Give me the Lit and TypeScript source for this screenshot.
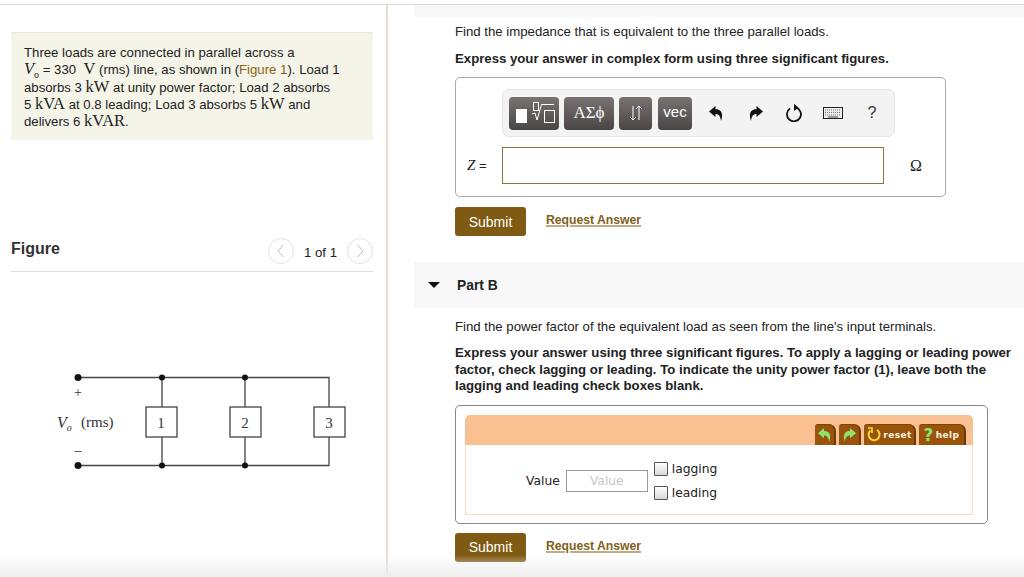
import { LitElement, html, css, svg } from 'lit';
import { customElement } from 'lit/decorators.js';

const undoIcon = svg`<path d="M0 5.5 L6.5 0 L6.5 3.2 C11.5 3.2 15 6.5 12 15 C11.5 10.5 10 8 6.5 8 L6.5 11 Z" fill="currentColor"/>`;
const redoIcon = svg`<path d="M14 5.5 L7.5 0 L7.5 3.2 C2.5 3.2 -1 6.5 2 15 C2.5 10.5 4 8 7.5 8 L7.5 11 Z" fill="currentColor"/>`;

@customElement('app-root')
export class AppRoot extends LitElement {
  static styles = css`
    :host {
      display: block;
      width: 1024px;
      height: 577px;
      overflow: hidden;
      background: #fff;
      font-family: "Liberation Sans", Arial, sans-serif;
      font-size: 13.2px;
      color: #222;
    }
    .page {
      position: relative;
      display: grid;
      grid-template-columns: 386px 2px 1fr;
      height: 572px;
      margin-top: 4px;
      border-top: 1px solid #d8d8d8;
    }
    .divider { background: #e6dcd2; }
    .left { padding: 27px 13px 0 11px; }
    .m { font-family: "Liberation Serif", serif; font-size: 16.5px; line-height: 1; }
    .problem {
      height: 108px;
      box-sizing: border-box;
      background: #f5f4e9;
      border-top: 1px solid #e9e8e0;
      padding: 12px 13px;
      font-size: 13.2px;
      line-height: 16.3px;
      color: #222;
    }
    .problem a { color: #8a6414; }
    .problem sub { font-size: 10px; line-height: 0; font-style: normal; }
    .figure-head {
      display: flex;
      align-items: center;
      margin-top: 96px;
      height: 35px;
      border-bottom: 1px solid #ddd;
    }
    .figure-head h3 { margin: 0 0 10px; font-size: 16px; color: #333; flex: 1; }
    .pager { display: flex; align-items: center; font-size: 13.2px; padding-bottom: 5px; }
    .pager span { margin: 2px 10px 0; }
    .circ {
      width: 26px; height: 26px; border: 1px solid #e3e3e3; border-radius: 50%;
      box-sizing: border-box; display: flex; align-items: center; justify-content: center;
    }
    .circuit { display: block; margin: 98px 0 0 39px; }
    .right { min-width: 0; }
    .bandtop { margin-left: 26px; height: 12px; background: #f8f8f8; }
    .content { padding: 8px 11px 0 67px; }
    .content2 { padding: 12px 11px 0 67px; }
    .line { margin: 0; line-height: 14px; color: #222; }
    .bold { font-weight: bold; margin-top: 12px; line-height: 16.4px; }
    .bold.tight { margin-top: 11px; }
    .answer {
      width: 491px; height: 120px; box-sizing: border-box;
      margin-top: 10px;
      border: 1px solid #aaa; border-radius: 5px; padding: 11px 0 0 46px;
    }
    .toolbar {
      width: 393px; height: 48px; box-sizing: border-box;
      background: #f3f3f3; border: 1px solid #e4e4e4; border-radius: 7px;
      display: flex; align-items: center; padding-left: 6px;
    }
    .tb {
      height: 33px; box-sizing: border-box; border-radius: 4px;
      background: linear-gradient(#7a7272, #4a4646);
      color: #fff; display: flex; align-items: center; justify-content: center;
      margin-right: 5px;
    }
    .tb.greek { width: 50px; font-family: "Liberation Serif", serif; font-size: 17px; }
    .tb.vec { width: 34px; font-size: 15px; margin: 0 0 0 1px; padding-bottom: 3px; }
    .ic { display: flex; align-items: center; justify-content: center; color: #111; }
    .help { width: 14px; margin-left: 22px; font-size: 16px; color: #333; }
    .zrow { display: flex; align-items: center; margin: 10px 0 0 -36px; }
    .zlabel { width: 36px; font-size: 13px; padding-left: 1px; box-sizing: border-box; }
    .zlabel i { font-size: 15px; }
    .zinput { width: 382px; height: 37px; box-sizing: border-box; border: 1px solid #8a7440; background: #fff; }
    .unit { margin-left: 26px; font-family: "Liberation Serif", serif; font-size: 16px; }
    .actions { display: flex; align-items: center; margin-top: 10px; }
    .submit {
      width: 71px; height: 29px; border-radius: 3px; background: #7f5a12; color: #fff;
      display: flex; align-items: center; justify-content: center; font-size: 14px;
    }
    .req {
      margin: -3px 0 0 20px; color: #80601a; font-weight: bold; font-size: 12.2px;
      text-decoration: underline; text-decoration-color: #bfae84; text-decoration-thickness: 2px; text-underline-offset: 1px;
    }
    .partb {
      margin: 26px 0 0 26px; height: 46px; background: #f8f8f8;
      display: flex; align-items: center; font-weight: bold; font-size: 13.8px; padding-left: 14px; gap: 17px;
    }
    .tri { width: 0; height: 0; border-left: 6px solid transparent; border-right: 6px solid transparent; border-top: 6px solid #111; }
    .answer2 {
      width: 533px; height: 119px; box-sizing: border-box; margin-top: 10px;
      border: 1px solid #888; border-radius: 5px; padding: 9px 14px 0 9px;
    }
    .tool {
      height: 100px; box-sizing: border-box; border: 1px solid #fbd9bc; border-top: 0; border-radius: 5px 5px 0 0;
    }
    .toolhead {
      height: 30px; margin: 0 -1px; background: #f9c092; border-radius: 5px 5px 0 0;
      display: flex; justify-content: flex-end; align-items: flex-end; padding-right: 7px; gap: 3px; box-sizing: border-box;
    }
    .tbtn {
      height: 21px; box-sizing: border-box; background: #99530a; border-radius: 3px 7px 0 0;
      border-top: 1px solid #7d4307; border-right: 2px solid #6d3b08;
      display: flex; align-items: center; justify-content: center; gap: 2px;
      color: #fff6e0; font-family: "DejaVu Sans", sans-serif; font-weight: bold; font-size: 9px; letter-spacing: 0.4px;
    }
    .tbtn svg { color: #8fe36a; }
    .qmark { color: #8fe36a; font-size: 17px; }
    .toolbody { display: flex; align-items: center; padding: 17px 0 0 60px; font-family: "DejaVu Sans", sans-serif; font-size: 12.3px; }
    .val { width: 82px; height: 22px; box-sizing: border-box; border: 1px solid #999; margin-left: 6px; color: #c6c6c6; display: flex; align-items: center; justify-content: center; }
    .checks { margin-left: 6px; display: flex; flex-direction: column; gap: 10px; }
    .chk { display: flex; align-items: center; gap: 4px; height: 14px; }
    .box { width: 14px; height: 14px; box-sizing: border-box; border: 1px solid #555; border-radius: 1px; background: linear-gradient(#fff, #d8d8d8); }
    .fade { position: absolute; left: 0; right: 0; bottom: 0; height: 22px; background: linear-gradient(rgba(238, 238, 238, 0), #eee); pointer-events: none; }
  `;

  render() {
    return html`
      <div class="page">
        <div class="left">
          <div class="problem">
            Three loads are connected in parallel across a<br />
            <span class="m"><i>V</i><sub>o</sub></span> = 330 &nbsp;<span class="m">V</span> (rms) line, as shown in (<a>Figure 1</a>). Load 1<br />
            absorbs 3 <span class="m">kW</span> at unity power factor; Load 2 absorbs<br />
            5 <span class="m">kVA</span> at 0.8 leading; Load 3 absorbs 5 <span class="m">kW</span> and<br />
            delivers 6 <span class="m">kVAR</span>.
          </div>
          <div class="figure-head">
            <h3>Figure</h3>
            <div class="pager">
              <div class="circ">
                <svg width="10" height="14" viewBox="0 0 10 14"><path d="M7.5 1 L2 7 L7.5 13" fill="none" stroke="#bbb" /></svg>
              </div>
              <span>1 of 1</span>
              <div class="circ">
                <svg width="10" height="14" viewBox="0 0 10 14"><path d="M2.5 1 L8 7 L2.5 13" fill="none" stroke="#bbb" /></svg>
              </div>
            </div>
          </div>
          ${this.circuit()}
        </div>
        <div class="divider"></div>
        <div class="right">
          <div class="bandtop"></div>
          <div class="content">
            <p class="line">Find the impedance that is equivalent to the three parallel loads.</p>
            <p class="line bold">Express your answer in complex form using three significant figures.</p>
            <div class="answer">
              <div class="toolbar">
                <div class="tb" style="width:50px">
                  <svg width="50" height="33" viewBox="0 0 50 33" fill="none" stroke="#fff">
                    <rect x="7" y="12" width="11" height="14" fill="#fff" stroke="none" />
                    <rect x="24.5" y="5.5" width="5" height="8" />
                    <path d="M23 17 L26 16 L28 23 L32.5 7.5 H45" />
                    <rect x="35.5" y="13.5" width="10" height="12" />
                  </svg>
                </div>
                <div class="tb greek">ΑΣϕ</div>
                <div class="tb" style="width:33px">
                  <svg width="18" height="18" viewBox="0 0 18 18" fill="none" stroke="#fff">
                    <path d="M6 2 V16 M3 13 L6 16 L9 13 M12 16 V2 M9 5 L12 2 L15 5" />
                  </svg>
                </div>
                <div class="tb vec">vec</div>
                <div class="ic" style="width:14px;margin-left:17px">
                  <svg width="14" height="15" viewBox="0 0 14 15">${undoIcon}</svg>
                </div>
                <div class="ic" style="width:14px;margin-left:26px">
                  <svg width="14" height="15" viewBox="0 0 14 15">${redoIcon}</svg>
                </div>
                <div class="ic" style="width:18px;margin-left:22px">
                  <svg width="18" height="18" viewBox="0 0 18 18" fill="none" stroke="#111" stroke-width="1.8">
                    <path d="M5 4.5 A7 7 0 1 0 11 3.6" />
                    <path d="M9 0 L13.5 3.6 L9 7 Z" fill="#111" stroke="none" />
                  </svg>
                </div>
                <div class="ic" style="width:20px;margin-left:20px">
                  <svg width="20" height="12" viewBox="0 0 20 12" fill="none">
                    <rect x="0.5" y="0.5" width="19" height="11" stroke="#222" fill="#eee" />
                    <path d="M2 3 H18 M2 5.5 H18 M2 8 H18" stroke="#777" stroke-dasharray="1 1" />
                    <path d="M5 10 H15" stroke="#444" />
                  </svg>
                </div>
                <div class="ic help">?</div>
              </div>
              <div class="zrow">
                <div class="zlabel"><i class="m">Z</i> =</div>
                <div class="zinput"></div>
                <div class="unit">Ω</div>
              </div>
            </div>
            <div class="actions">
              <div class="submit">Submit</div>
              <div class="req">Request Answer</div>
            </div>
          </div>
          <div class="partb"><div class="tri"></div>Part B</div>
          <div class="content2">
            <p class="line">Find the power factor of the equivalent load as seen from the line's input terminals.</p>
            <p class="line bold tight">Express your answer using three significant figures. To apply a lagging or leading power factor, check lagging or leading. To indicate the unity power factor (1), leave both the lagging and leading check boxes blank.</p>
            <div class="answer2">
              <div class="tool">
                <div class="toolhead">
                  <div class="tbtn" style="width:21px">
                    <svg width="13" height="14" viewBox="0 0 14 15">${undoIcon}</svg>
                  </div>
                  <div class="tbtn" style="width:22px">
                    <svg width="13" height="14" viewBox="0 0 14 15">${redoIcon}</svg>
                  </div>
                  <div class="tbtn" style="width:52px">
                    <svg width="15" height="15" viewBox="0 0 15 15" fill="none" stroke="#fdd835" stroke-width="2">
                      <path d="M4.5 3.5 A5.5 5.5 0 1 0 11 3" />
                      <path d="M2 1 L6 1 L6 6" stroke-width="1.6" />
                    </svg>reset
                  </div>
                  <div class="tbtn" style="width:47px">
                    <span class="qmark">?</span>help
                  </div>
                </div>
                <div class="toolbody">
                  Value
                  <div class="val">Value</div>
                  <div class="checks">
                    <div class="chk"><div class="box"></div>lagging</div>
                    <div class="chk"><div class="box"></div>leading</div>
                  </div>
                </div>
              </div>
            </div>
            <div class="actions" style="margin-top:9px">
              <div class="submit">Submit</div>
              <div class="req">Request Answer</div>
            </div>
          </div>
        </div>
        <div class="fade"></div>
      </div>
    `;
  }

  circuit() {
    return html`
      <svg class="circuit" width="300" height="100" viewBox="50 370 300 100">
        <g fill="none" stroke="#444" stroke-width="1.3">
          <path d="M78 377.500 H329 V407 M329 437 V465.500 H78" />
          <path d="M162 377 V407 M162 437 V465 M245 377 V407 M245 437 V465" />
          <rect x="146" y="407" width="31" height="30" />
          <rect x="230" y="407" width="31" height="30" />
          <rect x="314" y="407" width="31" height="30" />
        </g>
        <g fill="#111">
          <circle cx="78" cy="377.500" r="3.500" />
          <circle cx="162" cy="377.500" r="3" />
          <circle cx="245" cy="377.500" r="3" />
          <circle cx="78" cy="465.500" r="3.500" />
          <circle cx="162" cy="465.500" r="3" />
          <circle cx="245" cy="465.500" r="3" />
        </g>
        <g font-family="Liberation Serif, serif" font-size="15" fill="#333">
          <text x="161" y="428" text-anchor="middle">1</text>
          <text x="245" y="428" text-anchor="middle">2</text>
          <text x="329" y="428" text-anchor="middle">3</text>
          <text x="78" y="397" text-anchor="middle" font-size="14">+</text>
          <text x="78" y="455" text-anchor="middle" font-size="14">–</text>
          <text x="57" y="428" font-style="italic" font-size="16">V<tspan font-size="10" dy="3">o</tspan></text>
          <text x="81" y="427">(rms)</text>
        </g>
      </svg>
    `;
  }
}
